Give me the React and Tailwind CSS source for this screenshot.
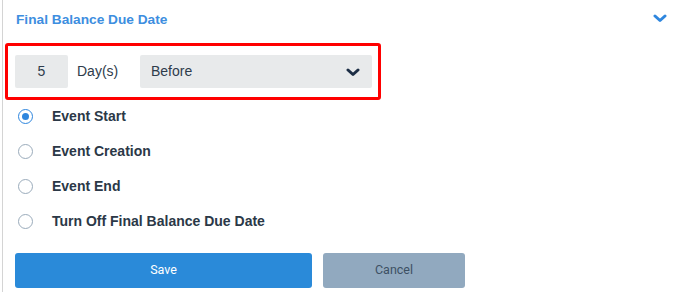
import React from "react";

const F = "font-['Liberation_Sans','Arial',sans-serif]";

function Radio({ checked, label }) {
  return (
    <div className="flex items-center h-[35px]">
      <div className="w-[20px] flex justify-center ml-[15px]">
        {checked ? (
          <span className="w-[15px] h-[15px] rounded-full border-[1.5px] border-[#2e86de] flex items-center justify-center">
            <span className="w-[7px] h-[7px] rounded-full bg-[#2e86de]" />
          </span>
        ) : (
          <span className="w-[15px] h-[15px] rounded-full border-[1.5px] border-[#9aabbb]" />
        )}
      </div>
      <span className={`ml-[17px] text-[14px] font-bold text-[#2b3847] ${F}`}>{label}</span>
    </div>
  );
}

export default function App() {
  return (
    <div className="w-[677px] h-[292px] bg-white relative font-['Roboto',sans-serif] overflow-hidden">
      <div className="absolute left-[2px] top-0 bottom-0 w-px bg-[#d4d4d4]" />
      <div className="flex items-center justify-between h-[40px] pl-[16px] pr-[10px]">
        <span className={`text-[13.7px] font-bold text-[#3d8ee0] ${F}`}>Final Balance Due Date</span>
        <svg width="14" height="10" viewBox="0 0 14 10" className="mt-[-4px]">
          <path d="M2 3 L7 7.5 L12 3" stroke="#2e86de" strokeWidth="3" fill="none" strokeLinecap="round" strokeLinejoin="round" />
        </svg>
      </div>
      <div className="ml-[5px] mt-[3px] w-[376px] h-[57px] border-[3px] border-[#ff0000] rounded-[3px] flex items-center pl-[7px]">
        <div className={`w-[53px] h-[33px] bg-[#e8eaeb] rounded-[2px] flex items-center justify-center text-[14px] text-[#2e3c4b] ${F}`}>5</div>
        <span className={`w-[72px] pl-[9px] text-[14px] text-[#2e3c4b] ${F}`}>Day(s)</span>
        <div className="w-[232px] h-[33px] bg-[#e8eaeb] rounded-[2px] flex items-center justify-between pl-[11px] pr-[12px]">
          <span className={`text-[14px] text-[#2e3c4b] ${F}`}>Before</span>
          <svg width="14" height="10" viewBox="0 0 14 10">
            <path d="M2 3 L7 7.5 L12 3" stroke="#1c2e45" strokeWidth="3" fill="none" strokeLinecap="round" strokeLinejoin="round" />
          </svg>
        </div>
      </div>
      <div className="flex flex-col mt-[-1px]">
        <Radio checked label="Event Start" />
        <Radio label="Event Creation" />
        <Radio label="Event End" />
        <Radio label="Turn Off Final Balance Due Date" />
      </div>
      <div className="flex ml-[15px] mt-[14px] gap-[11px]">
        <button className="w-[297px] h-[35px] bg-[#2a8ad9] rounded-[3px] text-white text-[12.5px]">Save</button>
        <button className="w-[142px] h-[35px] bg-[#91a9bf] rounded-[3px] text-[#3d5063] text-[12.5px]">Cancel</button>
      </div>
    </div>
  );
}
